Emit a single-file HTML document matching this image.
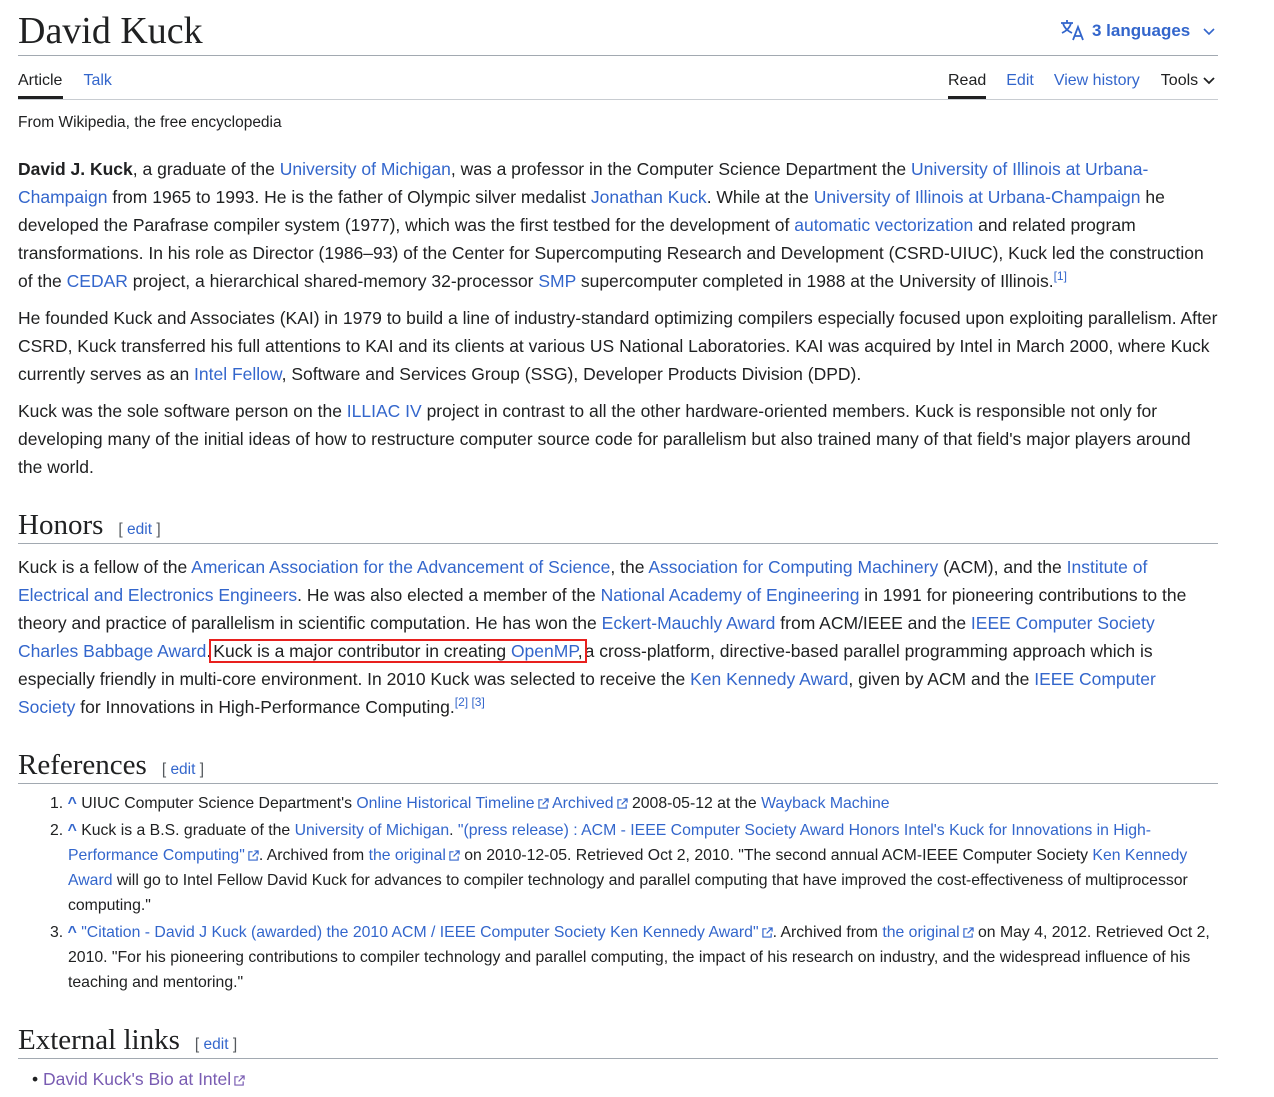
<!DOCTYPE html>
<html><head><meta charset="utf-8"><style>
body{margin:0;width:1274px;height:1097px;background:#fff;color:#202122;font-family:"Liberation Sans",Arial,sans-serif;position:relative;overflow:hidden}
a{color:#3366cc;text-decoration:none}
.abs{position:absolute;left:18px;white-space:nowrap}
.p{font-size:17.5px;line-height:28px}
sup{font-size:12px;line-height:0;vertical-align:super}
h1,h2{font-family:"Liberation Serif",serif;font-weight:normal;margin:0}
.hr{position:absolute;left:18px;width:1200px;height:1px;background:#a2a9b1}
.ed{font-family:"Liberation Sans",sans-serif;font-size:15.5px;color:#54595d;margin-left:15px}
.ref{font-size:15.8px;line-height:25px}
.ext{display:inline-block;width:11px;height:11px;vertical-align:-1px;margin-left:3px}
</style></head><body>
<h1 class="abs" style="top:8px;font-size:38px;line-height:46px">David Kuck</h1>
<div class="abs" style="left:1060px;top:19px;font-size:17px;font-weight:bold;color:#3366cc;line-height:24px">
<svg width="26" height="22" viewBox="0 0 26 22" style="vertical-align:-5px;margin-right:6px"><g fill="none" stroke="#3366cc" stroke-width="1.8"><path d="M1 4h12M7 1v3M3 4c1 5 5 8 9 10M11 4c-1 5-5 8-9 10"/><path d="M13 21l5-13 5 13M15 17h6"/></g></svg>3 languages <svg width="12" height="10" viewBox="0 0 12 10" style="margin-left:8px"><path d="M1 3l5 5 5-5" fill="none" stroke="#3366cc" stroke-width="1.6"/></svg></div>
<div class="hr" style="top:55px"></div>
<div class="abs" style="top:71px;font-size:16px;line-height:20px">Article<span style="margin-left:21px;color:#3366cc">Talk</span></div>
<div style="position:absolute;left:18px;top:96px;width:45px;height:3px;background:#202122"></div>
<div class="abs" style="left:948px;top:71px;font-size:16px;line-height:20px">Read<a style="margin-left:20px">Edit</a><a style="margin-left:20px">View history</a><span style="margin-left:21px">Tools</span> <svg width="12" height="10" viewBox="0 0 12 10"><path d="M1 3l5 5 5-5" fill="none" stroke="#202122" stroke-width="1.8"/></svg></div>
<div style="position:absolute;left:948px;top:96px;width:38px;height:3px;background:#202122"></div>
<div class="hr" style="top:99px;background:#c8ccd1"></div>
<div class="abs" style="top:113px;font-size:15.5px;line-height:20px">From Wikipedia, the free encyclopedia</div>

<div class="abs p" style="top:155px"><b>David J. Kuck</b>, a graduate of the <a>University of Michigan</a>, was a professor in the Computer Science Department the <a>University of Illinois at Urbana-</a><br><a>Champaign</a> from 1965 to 1993. He is the father of Olympic silver medalist <a>Jonathan Kuck</a>. While at the <a>University of Illinois at Urbana-Champaign</a> he<br>developed the Parafrase compiler system (1977), which was the first testbed for the development of <a>automatic vectorization</a> and related program<br>transformations. In his role as Director (1986–93) of the Center for Supercomputing Research and Development (CSRD-UIUC), Kuck led the construction<br>of the <a>CEDAR</a> project, a hierarchical shared-memory 32-processor <a>SMP</a> supercomputer completed in 1988 at the University of Illinois.<sup><a>[1]</a></sup></div>

<div class="abs p" style="top:304px">He founded Kuck and Associates (KAI) in 1979 to build a line of industry-standard optimizing compilers especially focused upon exploiting parallelism. After<br>CSRD, Kuck transferred his full attentions to KAI and its clients at various US National Laboratories. KAI was acquired by Intel in March 2000, where Kuck<br>currently serves as an <a>Intel Fellow</a>, Software and Services Group (SSG), Developer Products Division (DPD).</div>

<div class="abs p" style="top:397px">Kuck was the sole software person on the <a>ILLIAC IV</a> project in contrast to all the other hardware-oriented members. Kuck is responsible not only for<br>developing many of the initial ideas of how to restructure computer source code for parallelism but also trained many of that field's major players around<br>the world.</div>

<h2 class="abs" style="top:508px;font-size:29px;line-height:34px">Honors<span class="ed">[ <a>edit</a> ]</span></h2>
<div class="hr" style="top:543px"></div>
<div class="abs p" style="top:553px">Kuck is a fellow of the <a>American Association for the Advancement of Science</a>, the <a>Association for Computing Machinery</a> (ACM), and the <a>Institute of</a><br><a>Electrical and Electronics Engineers</a>. He was also elected a member of the <a>National Academy of Engineering</a> in 1991 for pioneering contributions to the<br>theory and practice of parallelism in scientific computation. He has won the <a>Eckert-Mauchly Award</a> from ACM/IEEE and the <a>IEEE Computer Society</a><br><a>Charles Babbage Award</a>.<span style="outline:2px solid #e8201e;padding:0 2px">Kuck is a major contributor in creating <a>OpenMP</a>,</span>a cross-platform, directive-based parallel programming approach which is<br>especially friendly in multi-core environment. In 2010 Kuck was selected to receive the <a>Ken Kennedy Award</a>, given by ACM and the <a>IEEE Computer</a><br><a>Society</a> for Innovations in High-Performance Computing.<sup><a>[2]</a> <a>[3]</a></sup></div>

<h2 class="abs" style="top:748px;font-size:29px;line-height:34px">References<span class="ed">[ <a>edit</a> ]</span></h2>
<div class="hr" style="top:783px"></div>
<div class="abs ref" style="left:50px;top:791px">
<div>1. <a><b>^</b></a> UIUC Computer Science Department's <a>Online Historical Timeline</a><svg class="ext" viewBox="0 0 12 12"><path d="M5 2H1v9h9V7M7 1h4v4M11 1L5 7" fill="none" stroke="#3366cc" stroke-width="1.3"/></svg> <a>Archived</a><svg class="ext" viewBox="0 0 12 12"><path d="M5 2H1v9h9V7M7 1h4v4M11 1L5 7" fill="none" stroke="#3366cc" stroke-width="1.3"/></svg> 2008-05-12 at the <a>Wayback Machine</a></div>
<div style="margin-top:2px">2. <a><b>^</b></a> Kuck is a B.S. graduate of the <a>University of Michigan</a>. <a>"(press release) : ACM - IEEE Computer Society Award Honors Intel's Kuck for Innovations in High-</a><br><span style="margin-left:18px"></span><a>Performance Computing"</a><svg class="ext" viewBox="0 0 12 12"><path d="M5 2H1v9h9V7M7 1h4v4M11 1L5 7" fill="none" stroke="#3366cc" stroke-width="1.3"/></svg>. Archived from <a>the original</a><svg class="ext" viewBox="0 0 12 12"><path d="M5 2H1v9h9V7M7 1h4v4M11 1L5 7" fill="none" stroke="#3366cc" stroke-width="1.3"/></svg> on 2010-12-05. Retrieved Oct 2, 2010. "The second annual ACM-IEEE Computer Society <a>Ken Kennedy</a><br><span style="margin-left:18px"></span><a>Award</a> will go to Intel Fellow David Kuck for advances to compiler technology and parallel computing that have improved the cost-effectiveness of multiprocessor<br><span style="margin-left:18px"></span>computing."</div>
<div style="margin-top:2px">3. <a><b>^</b></a> <a>"Citation - David J Kuck (awarded) the 2010 ACM / IEEE Computer Society Ken Kennedy Award"</a><svg class="ext" viewBox="0 0 12 12"><path d="M5 2H1v9h9V7M7 1h4v4M11 1L5 7" fill="none" stroke="#3366cc" stroke-width="1.3"/></svg>. Archived from <a>the original</a><svg class="ext" viewBox="0 0 12 12"><path d="M5 2H1v9h9V7M7 1h4v4M11 1L5 7" fill="none" stroke="#3366cc" stroke-width="1.3"/></svg> on May 4, 2012. Retrieved Oct 2,<br><span style="margin-left:18px"></span>2010. "For his pioneering contributions to compiler technology and parallel computing, the impact of his research on industry, and the widespread influence of his<br><span style="margin-left:18px"></span>teaching and mentoring."</div>
</div>

<h2 class="abs" style="top:1023px;font-size:29px;line-height:34px">External links<span class="ed">[ <a>edit</a> ]</span></h2>
<div class="hr" style="top:1058px"></div>
<div class="abs" style="left:32px;top:1067px;font-size:17.5px;line-height:24px">• <a style="color:#795cb2">David Kuck's Bio at Intel</a><svg class="ext" viewBox="0 0 12 12"><path d="M5 2H1v9h9V7M7 1h4v4M11 1L5 7" fill="none" stroke="#795cb2" stroke-width="1.3"/></svg></div>
</body></html>
